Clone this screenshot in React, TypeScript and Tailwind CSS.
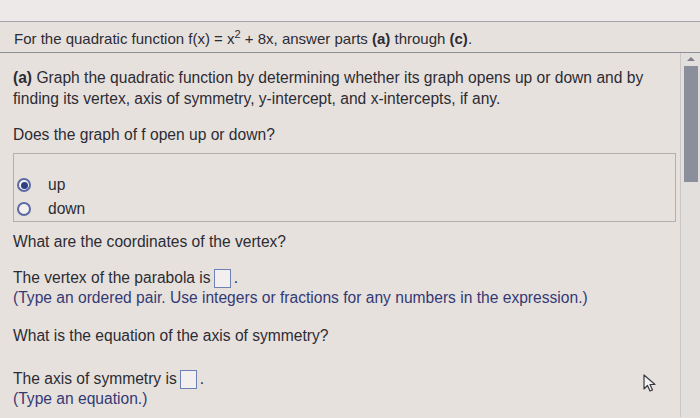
import React from "react";

const font = { fontFamily: '"Liberation Sans", Arial, sans-serif' };

function Radio({ checked }: { checked?: boolean }) {
  return (
    <span className="flex h-[14px] w-[14px] items-center justify-center rounded-full border-[2px] border-[#5b6aa3] bg-[#f3f0ef]">
      {checked && <span className="h-[7px] w-[7px] rounded-full bg-[#2f3f86]" />}
    </span>
  );
}

function AnswerBox() {
  return <span className="mx-[3px] inline-block h-[19px] w-[17px] border border-[#6f80b4] bg-[#f2efee]" />;
}

export default function App() {
  return (
    <div className="h-[418px] w-[700px] overflow-hidden bg-[#e7e1de] text-[#2c2c33]" style={font}>
      <div className="h-[22px] border-b border-[#a6a5aa] bg-[#ece9e8]" />
      <div className="flex h-[31px] items-center border-b border-[#8f8f96] pl-[14px] pt-[4px] text-[15px]">
        <span>
          For the quadratic function f(x) = x<sup className="text-[11px]">2</sup> + 8x, answer parts <b>(a)</b> through <b>(c)</b>.
        </span>
      </div>
      <div className="flex h-[364px]">
        <div className="flex-1 pl-[13px] pr-[4px] text-[15.6px] leading-[20px]">
          <p className="mt-[14px] leading-[21px]">
            <b>(a)</b> Graph the quadratic function by determining whether its graph opens up or down and by
            <br />
            finding its vertex, axis of symmetry, y-intercept, and x-intercepts, if any.
          </p>
          <p className="mt-[16px]">Does the graph of f open up or down?</p>
          <div className="mt-[8px] border border-[#b3afb0] pl-[3px] pt-[21px] pb-[2px]">
            <div className="flex flex-col gap-[4px]">
              <label className="flex h-[20px] items-center gap-[17px]">
                <Radio checked />
                <span>up</span>
              </label>
              <label className="flex h-[20px] items-center gap-[17px]">
                <Radio />
                <span>down</span>
              </label>
            </div>
          </div>
          <p className="mt-[10px]">What are the coordinates of the vertex?</p>
          <p className="mt-[16px] flex h-[20px] items-center">
            The vertex of the parabola is
            <AnswerBox />.
          </p>
          <p className="text-[#333a74]">(Type an ordered pair. Use integers or fractions for any numbers in the expression.)</p>
          <p className="mt-[18px]">What is the equation of the axis of symmetry?</p>
          <p className="mt-[23px] flex h-[20px] items-center">
            The axis of symmetry is
            <AnswerBox />.
          </p>
          <div className="flex items-start justify-between">
            <p className="text-[#333a74]">(Type an equation.)</p>
            <svg width="16" height="20" viewBox="0 0 16 20" className="mr-[18px] -mt-[16px]">
              <path d="M2 2 L2 16 L5.5 12.5 L8 18 L10.5 17 L8 11.5 L13 11.5 Z" fill="#f4f2f2" stroke="#3a3a44" strokeWidth="1.2" strokeLinejoin="round" />
            </svg>
          </div>
        </div>
        <div className="w-[20px] border-l border-[#c9c6c7] bg-[#e3dfdd]">
          <div className="flex h-[8px] items-end justify-center">
            <span className="h-0 w-0 border-x-[4px] border-b-[4px] border-x-transparent border-b-[#7f7f88]" />
          </div>
          <div className="mx-auto mt-[5px] h-[116px] w-[14px] bg-[#8b8e9b]" />
        </div>
      </div>
    </div>
  );
}
